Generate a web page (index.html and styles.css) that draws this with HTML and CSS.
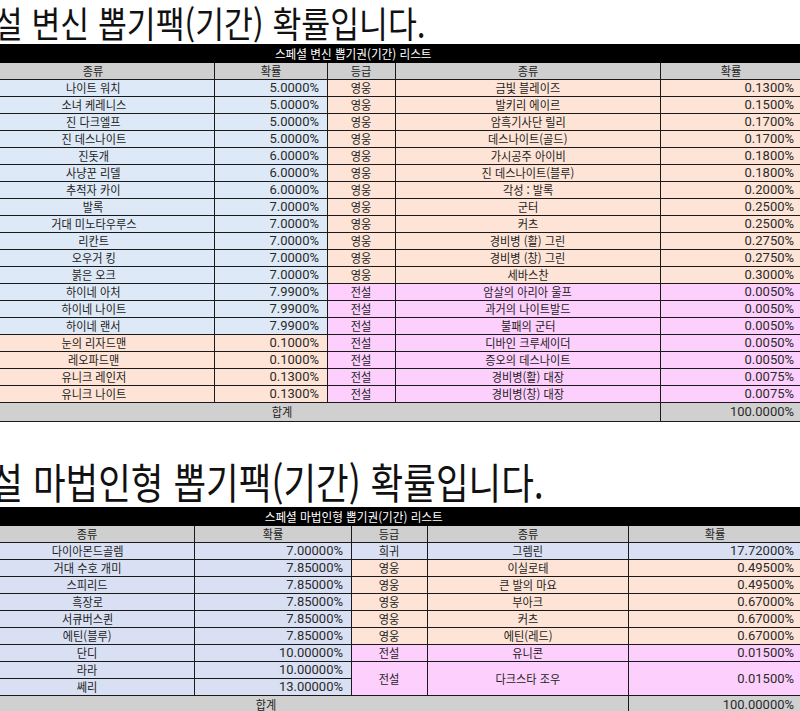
FILE: index.html
```html
<!DOCTYPE html>
<html lang="ko">
<head>
<meta charset="utf-8">
<title>확률</title>
<link rel="stylesheet" href="styles.css">
</head>
<body>
<div class="page">
  <section class="block">
    <h1 class="title"><span class="title-text">스페설 변신 뽑기팩(기간) 확률입니다.</span></h1>
    <table class="prob t1">
      <colgroup><col class="c0"><col class="c1"><col class="c2"><col class="c3"><col class="c4"><col class="c5"></colgroup>
      <tr class="bar"><td colspan="6"><span class="k">스페셜 변신 뽑기권(기간) 리스트</span></td></tr>
      <tr class="head"><td></td><td><span class="k">종류</span></td><td><span class="k">확률</span></td><td><span class="k">등급</span></td><td><span class="k">종류</span></td><td><span class="k">확률</span></td></tr>
      <tr><td class="blue" rowspan="19"></td><td class="blue"><span class="k">나이트 워치</span></td><td class="blue num">5.0000%</td><td class="peach"><span class="k">영웅</span></td><td class="peach"><span class="k">금빛 블레이즈</span></td><td class="peach num">0.1300%</td></tr>
      <tr><td class="blue"><span class="k">소녀 케레니스</span></td><td class="blue num">5.0000%</td><td class="peach"><span class="k">영웅</span></td><td class="peach"><span class="k">발키리 에이르</span></td><td class="peach num">0.1500%</td></tr>
      <tr><td class="blue"><span class="k">진 다크엘프</span></td><td class="blue num">5.0000%</td><td class="peach"><span class="k">영웅</span></td><td class="peach"><span class="k">암흑기사단 릴리</span></td><td class="peach num">0.1700%</td></tr>
      <tr><td class="blue"><span class="k">진 데스나이트</span></td><td class="blue num">5.0000%</td><td class="peach"><span class="k">영웅</span></td><td class="peach"><span class="k">데스나이트(골드)</span></td><td class="peach num">0.1700%</td></tr>
      <tr><td class="blue"><span class="k">진돗개</span></td><td class="blue num">6.0000%</td><td class="peach"><span class="k">영웅</span></td><td class="peach"><span class="k">가시공주 아이비</span></td><td class="peach num">0.1800%</td></tr>
      <tr><td class="blue"><span class="k">사냥꾼 리델</span></td><td class="blue num">6.0000%</td><td class="peach"><span class="k">영웅</span></td><td class="peach"><span class="k">진 데스나이트(블루)</span></td><td class="peach num">0.1800%</td></tr>
      <tr><td class="blue"><span class="k">추적자 카이</span></td><td class="blue num">6.0000%</td><td class="peach"><span class="k">영웅</span></td><td class="peach"><span class="k">각성 : 발록</span></td><td class="peach num">0.2000%</td></tr>
      <tr><td class="blue"><span class="k">발록</span></td><td class="blue num">7.0000%</td><td class="peach"><span class="k">영웅</span></td><td class="peach"><span class="k">군터</span></td><td class="peach num">0.2500%</td></tr>
      <tr><td class="blue"><span class="k">거대 미노타우루스</span></td><td class="blue num">7.0000%</td><td class="peach"><span class="k">영웅</span></td><td class="peach"><span class="k">커츠</span></td><td class="peach num">0.2500%</td></tr>
      <tr><td class="blue"><span class="k">리칸트</span></td><td class="blue num">7.0000%</td><td class="peach"><span class="k">영웅</span></td><td class="peach"><span class="k">경비병 (활) 그린</span></td><td class="peach num">0.2750%</td></tr>
      <tr><td class="blue"><span class="k">오우거 킹</span></td><td class="blue num">7.0000%</td><td class="peach"><span class="k">영웅</span></td><td class="peach"><span class="k">경비병 (창) 그린</span></td><td class="peach num">0.2750%</td></tr>
      <tr><td class="blue"><span class="k">붉은 오크</span></td><td class="blue num">7.0000%</td><td class="peach"><span class="k">영웅</span></td><td class="peach"><span class="k">세바스찬</span></td><td class="peach num">0.3000%</td></tr>
      <tr><td class="blue"><span class="k">하이네 아처</span></td><td class="blue num">7.9900%</td><td class="pink"><span class="k">전설</span></td><td class="pink"><span class="k">암살의 아리아 울프</span></td><td class="pink num">0.0050%</td></tr>
      <tr><td class="blue"><span class="k">하이네 나이트</span></td><td class="blue num">7.9900%</td><td class="pink"><span class="k">전설</span></td><td class="pink"><span class="k">과거의 나이트발드</span></td><td class="pink num">0.0050%</td></tr>
      <tr><td class="blue"><span class="k">하이네 랜서</span></td><td class="blue num">7.9900%</td><td class="pink"><span class="k">전설</span></td><td class="pink"><span class="k">불패의 군터</span></td><td class="pink num">0.0050%</td></tr>
      <tr><td class="peach"><span class="k">눈의 리자드맨</span></td><td class="peach num">0.1000%</td><td class="pink"><span class="k">전설</span></td><td class="pink"><span class="k">디바인 크루세이더</span></td><td class="pink num">0.0050%</td></tr>
      <tr><td class="peach"><span class="k">레오파드맨</span></td><td class="peach num">0.1000%</td><td class="pink"><span class="k">전설</span></td><td class="pink"><span class="k">증오의 데스나이트</span></td><td class="pink num">0.0050%</td></tr>
      <tr><td class="peach"><span class="k">유니크 레인저</span></td><td class="peach num">0.1300%</td><td class="pink"><span class="k">전설</span></td><td class="pink"><span class="k">경비병(활) 대장</span></td><td class="pink num">0.0075%</td></tr>
      <tr><td class="peach"><span class="k">유니크 나이트</span></td><td class="peach num">0.1300%</td><td class="pink"><span class="k">전설</span></td><td class="pink"><span class="k">경비병(창) 대장</span></td><td class="pink num">0.0075%</td></tr>
      <tr class="total"><td colspan="5"><span class="k">합계</span></td><td class="num">100.0000%</td></tr>
    </table>
  </section>

  <section class="block second">
    <h1 class="title big"><span class="title-text">스페설 마법인형 뽑기팩(기간) 확률입니다.</span></h1>
    <table class="prob t2">
      <colgroup><col class="d0"><col class="d1"><col class="d2"><col class="d3"><col class="d4"><col class="d5"></colgroup>
      <tr class="bar"><td colspan="6"><span class="k">스페셜 마법인형 뽑기권(기간) 리스트</span></td></tr>
      <tr class="head"><td></td><td><span class="k">종류</span></td><td><span class="k">확률</span></td><td><span class="k">등급</span></td><td><span class="k">종류</span></td><td><span class="k">확률</span></td></tr>
      <tr><td class="lav" rowspan="9"></td><td class="lav"><span class="k">다이아몬드골렘</span></td><td class="lav num">7.00000%</td><td class="lav"><span class="k">희귀</span></td><td class="lav"><span class="k">그렘린</span></td><td class="lav num">17.72000%</td></tr>
      <tr><td class="lav"><span class="k">거대 수호 개미</span></td><td class="lav num">7.85000%</td><td class="peach"><span class="k">영웅</span></td><td class="peach"><span class="k">이실로테</span></td><td class="peach num">0.49500%</td></tr>
      <tr><td class="lav"><span class="k">스피리드</span></td><td class="lav num">7.85000%</td><td class="peach"><span class="k">영웅</span></td><td class="peach"><span class="k">큰 발의 마요</span></td><td class="peach num">0.49500%</td></tr>
      <tr><td class="lav"><span class="k">흑장로</span></td><td class="lav num">7.85000%</td><td class="peach"><span class="k">영웅</span></td><td class="peach"><span class="k">부아크</span></td><td class="peach num">0.67000%</td></tr>
      <tr><td class="lav"><span class="k">서큐버스퀸</span></td><td class="lav num">7.85000%</td><td class="peach"><span class="k">영웅</span></td><td class="peach"><span class="k">커츠</span></td><td class="peach num">0.67000%</td></tr>
      <tr><td class="lav"><span class="k">에틴(블루)</span></td><td class="lav num">7.85000%</td><td class="peach"><span class="k">영웅</span></td><td class="peach"><span class="k">에틴(레드)</span></td><td class="peach num">0.67000%</td></tr>
      <tr><td class="lav"><span class="k">단디</span></td><td class="lav num">10.00000%</td><td class="pink"><span class="k">전설</span></td><td class="pink"><span class="k">유니콘</span></td><td class="pink num">0.01500%</td></tr>
      <tr><td class="lav"><span class="k">라라</span></td><td class="lav num">10.00000%</td><td class="pink" rowspan="2"><span class="k">전설</span></td><td class="pink" rowspan="2"><span class="k">다크스타 조우</span></td><td class="pink num" rowspan="2">0.01500%</td></tr>
      <tr><td class="lav"><span class="k">쎄리</span></td><td class="lav num">13.00000%</td></tr>
      <tr class="total"><td colspan="5"><span class="k">합계</span></td><td class="num">100.00000%</td></tr>
    </table>
  </section>
</div>
</body>
</html>
```
FILE: styles.css
```css
html, body {
  margin: 0;
  padding: 0;
  background: #ffffff;
  overflow: hidden;
}

body {
  font-family: "Noto Sans CJK KR", "Noto Sans", sans-serif;
  color: #222;
}

.page {
  margin-left: -96px;
  width: 898px;
}

.title {
  margin: 0;
  height: 44px;
  line-height: 44px;
  font-size: 36px;
  font-weight: 400;
  color: #111;
  white-space: nowrap;
  padding-left: 32px;
}

.title-text {
  display: inline-block;
  transform: scaleX(0.872);
  transform-origin: 0 50%;
}

.title.big {
  height: 48px;
  line-height: 44px;
  font-size: 42px;
  padding-left: 21px;
}

.title.big .title-text {
  transform: scaleX(0.845);
}

.second {
  margin-top: 37px;
}

.prob {
  width: 898px;
  table-layout: fixed;
  border-collapse: collapse;
  font-size: 12px;
}

.prob td {
  height: 16px;
  line-height: 16px;
  padding: 0 8px;
  border: 1px solid #1a1a1a;
  text-align: center;
  white-space: nowrap;
  overflow: hidden;
}

.k {
  display: inline-block;
  transform: scaleX(0.93);
  transform-origin: 50% 50%;
}

.prob td.num {
  text-align: right;
  font-family: Roboto, "Liberation Sans", sans-serif;
  font-size: 13px;
  color: #2a2a2a;
}

.c0 { width: 68px; }
.c1 { width: 242px; }
.c2 { width: 113px; }
.c3 { width: 68px; }
.c4 { width: 265px; }
.c5 { width: 142px; }

.d0 { width: 76px; }
.d1 { width: 214px; }
.d2 { width: 157px; }
.d3 { width: 76px; }
.d4 { width: 201px; }
.d5 { width: 174px; }

.bar td {
  background: #000;
  color: #fff;
  height: 17px;
  line-height: 17px;
  font-size: 12.5px;
  border-color: #000;
}

.head td {
  background: #cfcfcf;
}

.total td {
  background: #d0d0d0;
  height: 18px;
  line-height: 18px;
}

.blue { background: #dde9f6; }
.lav { background: #d9e0f3; }
.peach { background: #fde4d6; }
.pink { background: #fdcffd; }
```
